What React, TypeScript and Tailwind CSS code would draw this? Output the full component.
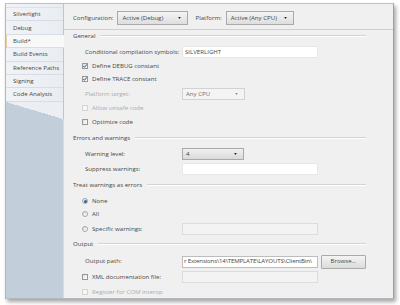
import React from "react";

function Check({ checked = false, disabled = false }: { checked?: boolean; disabled?: boolean }) {
  return (
    <span
      className={
        disabled
          ? "w-[6px] h-[6px] border border-[#d4d4d4] bg-[#f6f6f6] shrink-0 relative"
          : "w-[6px] h-[6px] border border-[#979797] bg-[linear-gradient(135deg,#e0e0e0,#ffffff)] shrink-0 relative"
      }
    >
      {checked && (
        <svg className="absolute left-[-1px] top-[-1px]" width="6" height="6" viewBox="0 0 6 6">
          <path d="M1.3 3 L2.5 4.3 L4.8 1.4" stroke="#31558f" strokeWidth="1" fill="none" />
        </svg>
      )}
    </span>
  );
}

function Radio({ checked = false }: { checked?: boolean }) {
  return (
    <span className="w-[6px] h-[6px] rounded-full border border-[#a4a7aa] bg-[linear-gradient(135deg,#dadada,#ffffff)] shrink-0 flex items-center justify-center">
      {checked && <span className="w-[3px] h-[3px] rounded-full bg-[#2d5fae]" />}
    </span>
  );
}

function Arrow({ light = false }: { light?: boolean }) {
  return (
    <svg width="3" height="2" viewBox="0 0 4 3" className="shrink-0">
      <path d="M0 0 L4 0 L2 3 Z" fill={light ? "#8a8a8a" : "#222"} />
    </svg>
  );
}

function Heading({ text }: { text: string }) {
  return (
    <div className="flex items-center h-[12px]">
      <span className="whitespace-nowrap">{text}</span>
      <div className="flex-1 ml-[5px] h-[2px] border-t border-[#d3d3d3] border-b border-b-white" />
    </div>
  );
}

function Tab({ label, selected = false }: { label: string; selected?: boolean }) {
  return (
    <div
      className={
        selected
          ? "h-[13.4px] flex items-center pl-[6px] bg-[#f8f8f8] border-l border-l-[#e9cf9e] border-b border-b-[#d9dde3] mr-[-1px] relative z-10"
          : "h-[13.4px] flex items-center pl-[6px] border-l border-l-[#eef0f3] border-b border-b-[#d9dde3]"
      }
    >
      <span className="whitespace-nowrap">{label}</span>
    </div>
  );
}

export default function App() {
  return (
    <div className="w-[400px] h-[305px] bg-white pl-[5px] pt-[3px] overflow-hidden font-['Open_Sans',sans-serif] text-[6.1px] leading-none text-[#474747]">
      <div className="w-[389px] h-[296px] flex border border-[#b4b8be] border-t-[#b7c3d3] border-r-[#9d9fa3] bg-[#f0f0f0] shadow-[2px_3px_4px_rgba(0,0,0,0.35)] overflow-hidden">
        {/* Sidebar */}
        <div className="w-[58px] shrink-0 flex flex-col bg-[#c3cedb]">
          <div className="bg-[linear-gradient(90deg,#f1f3f6,#e9edf2)] border-r border-r-[#bcc5d1]">
            <div className="h-[3px]" />
            <div className="border-t border-[#dde1e7]">
              <Tab label="Silverlight" />
              <Tab label="Debug" />
              <Tab label="Build*" selected />
              <Tab label="Build Events" />
              <Tab label="Reference Paths" />
              <Tab label="Signing" />
              <Tab label="Code Analysis" />
            </div>
          </div>
          <div className="h-[17px] bg-[linear-gradient(to_top_right,#c3cedb_50%,#ebeef3_50%)] border-r border-r-[#bcc5d1]" />
          <div className="flex-1 border-r border-r-[#d6dde6]" />
        </div>

        {/* Content */}
        <div className="flex-1 flex flex-col bg-[#f0f0f0]">
          <div className="h-[28px] pt-[3px] flex items-center pl-[9px] border-b border-[#cfcfcf]">
            <span className="whitespace-nowrap">Configuration:</span>
            <div className="ml-[4px] w-[71px] h-[14px] border border-[#a9a9a9] bg-[linear-gradient(#f5f5f5,#dedede)] flex items-center pl-[4px] pr-[6px]">
              <span className="flex-1 whitespace-nowrap">Active (Debug)</span>
              <Arrow />
            </div>
            <span className="ml-[7px] whitespace-nowrap">Platform:</span>
            <div className="ml-[4px] w-[68px] h-[14px] border border-[#a9a9a9] bg-[linear-gradient(#f5f5f5,#dedede)] flex items-center pl-[4px] pr-[6px]">
              <span className="flex-1 whitespace-nowrap">Active (Any CPU)</span>
              <Arrow />
            </div>
          </div>

          <div className="w-[302px] pl-[9px] flex flex-col">
            <Heading text="General" />

            <div className="flex items-center h-[12px] mt-[4px] pl-[12px]">
              <span className="w-[97px] whitespace-nowrap">Conditional compilation symbols:</span>
              <div className="w-[136px] h-[12px] bg-white border border-[#e8e8e8] flex items-center pl-[2px]">
                <span>SILVERLIGHT</span>
              </div>
            </div>

            <div className="flex items-center h-[12px] mt-[2px] pl-[9px] gap-[4px]">
              <Check checked />
              <span>Define DEBUG constant</span>
            </div>
            <div className="flex items-center h-[12px] mt-[1px] pl-[9px] gap-[4px]">
              <Check checked />
              <span>Define TRACE constant</span>
            </div>

            <div className="flex items-center h-[12px] mt-[3px] pl-[12px]">
              <span className="w-[97px] text-[#ababab] whitespace-nowrap">Platform target:</span>
              <div className="w-[63px] h-[12px] bg-[#f4f4f4] border border-[#d2d2d2] flex items-center pl-[3px] pr-[6px]">
                <span className="flex-1 text-[#707070]">Any CPU</span>
                <Arrow light />
              </div>
            </div>

            <div className="flex items-center h-[12px] mt-[2px] pl-[9px] gap-[4px]">
              <Check disabled />
              <span className="text-[#ababab]">Allow unsafe code</span>
            </div>
            <div className="flex items-center h-[12px] mt-[2px] pl-[9px] gap-[4px]">
              <Check />
              <span>Optimize code</span>
            </div>

            <div className="mt-[4px]">
              <Heading text="Errors and warnings" />
            </div>

            <div className="flex items-center h-[12px] mt-[4px] pl-[12px]">
              <span className="w-[97px] whitespace-nowrap">Warning level:</span>
              <div className="w-[62px] h-[12px] border border-[#a9a9a9] bg-[linear-gradient(#f0f0f0,#dadada)] flex items-center pl-[3px] pr-[6px]">
                <span className="flex-1">4</span>
                <Arrow />
              </div>
            </div>

            <div className="flex items-center h-[12px] mt-[3px] pl-[12px]">
              <span className="w-[97px] whitespace-nowrap">Suppress warnings:</span>
              <div className="w-[136px] h-[12px] bg-white border border-[#e8e8e8]" />
            </div>

            <div className="mt-[4px]">
              <Heading text="Treat warnings as errors" />
            </div>

            <div className="flex items-center h-[12px] mt-[4px] pl-[9px] gap-[4px]">
              <Radio checked />
              <span>None</span>
            </div>
            <div className="flex items-center h-[12px] mt-[1px] pl-[9px] gap-[4px]">
              <Radio />
              <span>All</span>
            </div>
            <div className="flex items-center h-[12px] mt-[3px] pl-[9px]">
              <div className="w-[100px] flex items-center gap-[4px]">
                <Radio />
                <span className="whitespace-nowrap">Specific warnings:</span>
              </div>
              <div className="w-[136px] h-[12px] bg-[#f3f3f3] border border-[#dcdcdc]" />
            </div>

            <div className="mt-[3px]">
              <Heading text="Output" />
            </div>

            <div className="flex items-center h-[13px] mt-[5px] pl-[12px]">
              <span className="w-[97px] whitespace-nowrap">Output path:</span>
              <div className="w-[136px] h-[12px] bg-white border border-[#bdbdbd] flex items-center pl-[1px] overflow-hidden">
                <span className="whitespace-nowrap tracking-[-0.15px]">r Extensions\14\TEMPLATE\LAYOUTS\ClientBin\</span>
              </div>
              <div className="ml-[3px] w-[45px] h-[14px] border border-[#aaaaaa] rounded-[1px] bg-[linear-gradient(#f4f4f4,#dcdcdc)] flex items-center justify-center">
                <span>Browse...</span>
              </div>
            </div>

            <div className="flex items-center h-[12px] mt-[3px] pl-[9px]">
              <div className="w-[100px] flex items-center gap-[4px]">
                <Check />
                <span className="whitespace-nowrap">XML documentation file:</span>
              </div>
              <div className="w-[136px] h-[12px] bg-[#f3f3f3] border border-[#dcdcdc]" />
            </div>

            <div className="flex items-center h-[12px] mt-[3px] pl-[9px] gap-[4px]">
              <Check disabled />
              <span className="text-[#ababab] whitespace-nowrap">Register for COM interop</span>
            </div>
          </div>
        </div>
      </div>
    </div>
  );
}
